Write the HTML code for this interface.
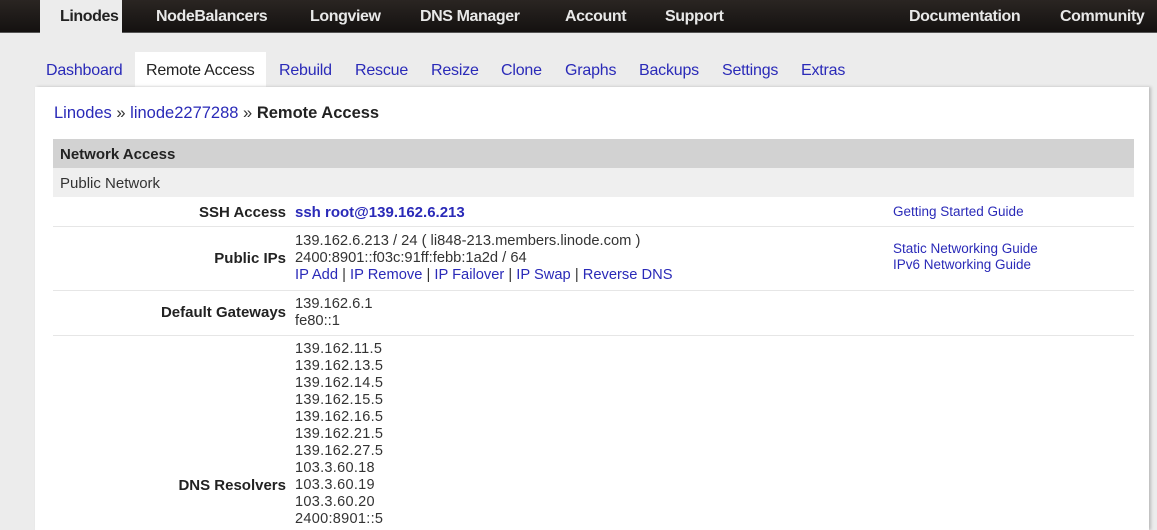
<!DOCTYPE html>
<html style="overflow:hidden"><head><style>
*{margin:0;padding:0;box-sizing:border-box}
html,body{width:1157px;height:530px;overflow:hidden}
body{background:#ececec;font-family:"Liberation Sans",Arial,sans-serif;position:relative}
.top{position:absolute;left:0;top:0;width:1157px;height:33px;background:linear-gradient(#2a2522,#141110);border-bottom:1px solid #555}
.top span{position:absolute;top:8px;color:#e8e8e8;font-size:16px;font-weight:bold;letter-spacing:-0.4px}
.tab1{position:absolute;left:40px;top:0;width:82px;height:33px;background:#ececec}
.sub span{position:absolute;top:62px;color:#2a2ab8;font-size:16px;letter-spacing:-0.2px}
.ratab{position:absolute;left:135px;top:52px;width:131px;height:37px;background:#fff}
.panel{position:absolute;left:35px;top:87px;width:1114px;height:443px;background:#fff;box-shadow:2px 0 3px #bbb}
.a{position:absolute;white-space:nowrap;font-size:14.7px;color:#333}
a,.l{color:#2a2ab8;text-decoration:none}
.b{font-weight:bold;color:#222;font-size:15px}
.r{text-align:right;width:240px;left:46px}
.line{position:absolute;left:53px;width:1081px;height:1px;background:#e6e6e6}
</style></head><body>
<div class="top"></div>
<div class="tab1"></div>
<div class="top" style="background:none;border:none">
<span style="left:60px;color:#222">Linodes</span>
<span style="left:156px">NodeBalancers</span>
<span style="left:310px">Longview</span>
<span style="left:420px">DNS Manager</span>
<span style="left:565px">Account</span>
<span style="left:665px">Support</span>
<span style="left:909px">Documentation</span>
<span style="left:1060px">Community</span>
</div>
<div class="ratab"></div>
<div class="sub">
<span style="left:46px">Dashboard</span>
<span style="left:146px;color:#222">Remote Access</span>
<span style="left:279px">Rebuild</span>
<span style="left:355px">Rescue</span>
<span style="left:431px">Resize</span>
<span style="left:501px">Clone</span>
<span style="left:565px">Graphs</span>
<span style="left:639px">Backups</span>
<span style="left:722px">Settings</span>
<span style="left:801px">Extras</span>
</div>
<div class="panel"></div>
<div class="a" style="left:54px;top:104px;font-size:16.5px"><span class="l">Linodes</span> » <span class="l">linode2277288</span> » <b style="color:#222">Remote Access</b></div>
<div style="position:absolute;left:53px;top:139px;width:1081px;height:29px;background:#d2d2d2"></div>
<div class="a b" style="left:60px;top:146px">Network Access</div>
<div style="position:absolute;left:53px;top:168px;width:1081px;height:29px;background:#efefef"></div>
<div class="a" style="left:60px;top:175px;font-size:15px">Public Network</div>
<div class="a b r" style="top:204px">SSH Access</div>
<div class="a" style="left:295px;top:204px;font-size:15px;font-weight:bold"><span class="l">ssh root@139.162.6.213</span></div>
<div class="a l" style="left:893px;top:204px;font-size:13.5px">Getting Started Guide</div>
<div class="line" style="top:226px"></div>
<div class="a b r" style="top:250px">Public IPs</div>
<div class="a" style="left:295px;top:233px;line-height:17px">139.162.6.213 / 24 ( li848-213.members.linode.com )<br>2400:8901::f03c:91ff:febb:1a2d / 64<br><span class="l">IP Add</span> | <s class="l">IP Remove</s> | <s class="l">IP Failover</s> | <s class="l">IP Swap</s> | <span class="l">Reverse DNS</span></div>
<div class="a l" style="left:893px;top:241px;line-height:16px;font-size:13.5px">Static Networking Guide<br>IPv6 Networking Guide</div>
<div class="line" style="top:290px"></div>
<div class="a b r" style="top:304px">Default Gateways</div>
<div class="a" style="left:295px;top:296px;line-height:17px">139.162.6.1<br>fe80::1</div>
<div class="line" style="top:335px"></div>
<div class="a b r" style="top:477px">DNS Resolvers</div>
<div class="a" style="left:295px;top:341px;line-height:17px;font-size:14.5px;letter-spacing:0.3px">139.162.11.5<br>139.162.13.5<br>139.162.14.5<br>139.162.15.5<br>139.162.16.5<br>139.162.21.5<br>139.162.27.5<br>103.3.60.18<br>103.3.60.19<br>103.3.60.20<br>2400:8901::5<br>2400:8901::3</div>
</body></html>
